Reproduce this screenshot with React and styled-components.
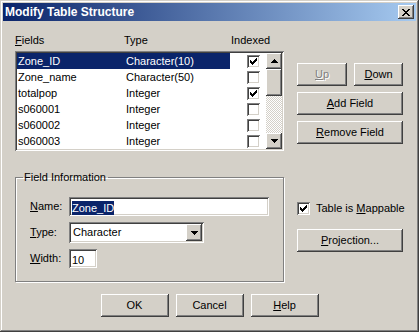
import React from "react";
import styled, { createGlobalStyle } from "styled-components";

const Global = createGlobalStyle`
  html, body { margin: 0; padding: 0; background: #d4d0c8; }
  body { font-family: "Liberation Sans", Arial, sans-serif; font-size: 11px; color: #000; }
  * { box-sizing: border-box; }
`;

const raised = `box-shadow: inset -1px -1px #404040, inset 1px 1px #ffffff, inset -2px -2px #808080, inset 2px 2px #d4d0c8;`;
const sunken = `box-shadow: inset 1px 1px #808080, inset -1px -1px #ffffff, inset 2px 2px #404040, inset -2px -2px #d4d0c8;`;

const Window = styled.div`
  width: 419px;
  height: 332px;
  background: #d4d0c8;
  padding: 3px;
  box-shadow: inset -1px -1px #404040, inset 1px 1px #d4d0c8, inset -2px -2px #808080, inset 2px 2px #ffffff;
  display: flex;
  flex-direction: column;
`;

const TitleBar = styled.div`
  height: 18px;
  flex: none;
  display: flex;
  align-items: center;
  justify-content: space-between;
  padding: 0 2px 0 2px;
  background: linear-gradient(to right, #0a246a, #a6caf0);
`;

const Title = styled.span`
  color: #fff;
  font-weight: bold;
  font-size: 12px;
  line-height: 18px;
`;

const CloseBox = styled.div`
  width: 16px;
  height: 14px;
  background: #d4d0c8;
  ${raised}
  display: flex;
  align-items: center;
  justify-content: center;
`;

const Body = styled.div`
  display: grid;
  grid-template-columns: 269px 106px;
  column-gap: 13px;
  padding: 13px 0 0 12px;
`;

const LeftTop = styled.div`
  display: flex;
  flex-direction: column;
  gap: 4px;
`;

const Header = styled.div`
  display: grid;
  grid-template-columns: 109px 107px auto;
  line-height: 13px;
  height: 13px;
`;

const U = styled.span`
  text-decoration: underline;
`;

const ListBox = styled.div`
  height: 100px;
  background: #fff;
  ${sunken}
  padding: 2px;
  display: flex;
`;

const Rows = styled.div`
  flex: 1;
  display: flex;
  flex-direction: column;
`;

const Row = styled.div`
  height: 16px;
  display: grid;
  grid-template-columns: 107px 106px 36px;
  align-items: stretch;
`;

const Cell = styled.div`
  line-height: 16px;
  padding-left: ${(p) => p.$pad}px;
  background: ${(p) => (p.$sel ? "#0a246a" : "transparent")};
  color: ${(p) => (p.$sel ? "#fff" : "#000")};
  white-space: nowrap;
`;

const CheckCell = styled.div`
  display: flex;
  align-items: center;
  padding-left: 17px;
`;

const Check = styled.div`
  width: 13px;
  height: 13px;
  flex: none;
  background: #fff;
  ${sunken}
  display: flex;
  align-items: center;
  justify-content: center;
`;

const ScrollBar = styled.div`
  width: 16px;
  display: flex;
  flex-direction: column;
  background-color: #ffffff;
  background-image: repeating-conic-gradient(#d4d0c8 0% 25%, #ffffff 0% 50%);
  background-size: 2px 2px;
`;

const ScrollBtn = styled.div`
  width: 16px;
  height: ${(p) => p.$h}px;
  background: #d4d0c8;
  ${raised}
  display: flex;
  align-items: center;
  justify-content: center;
  flex: none;
`;

const Spacer = styled.div`
  flex: 1;
`;

const RightTop = styled.div`
  display: flex;
  flex-direction: column;
  gap: 6px;
  padding-top: 29px;
`;

const BtnRow = styled.div`
  display: flex;
  justify-content: space-between;
`;

const Button = styled.div`
  width: ${(p) => p.$w}px;
  height: 23px;
  background: #d4d0c8;
  ${raised}
  display: flex;
  align-items: center;
  justify-content: center;
  line-height: 13px;
  white-space: nowrap;
  color: ${(p) => (p.$disabled ? "#808080" : "#000")};
  text-shadow: ${(p) => (p.$disabled ? "1px 1px #ffffff" : "none")};
`;

const Group = styled.fieldset`
  margin: 20px 0 0 0;
  padding: 13px 0 13px 14px;
  border: 1px solid #808080;
  box-shadow: inset 1px 1px #ffffff, 1px 1px #ffffff;
  display: flex;
  flex-direction: column;
  gap: 6px;
  min-width: 0;
`;

const Legend = styled.legend`
  padding: 0 2px 0 1px;
  margin-left: -7px;
  line-height: 13px;
`;

const FormRow = styled.div`
  display: flex;
  align-items: center;
`;

const Label = styled.div`
  width: 39px;
  line-height: 13px;
`;

const Input = styled.div`
  width: ${(p) => p.$w}px;
  height: ${(p) => p.$h || 19}px;
  background: #fff;
  ${sunken}
  padding: 2px 3px 0 3px;
  line-height: 14px;
  display: flex;
  align-items: center;
`;

const Selected = styled.span`
  background: #0a246a;
  color: #fff;
`;

const Select = styled.div`
  width: 135px;
  height: 21px;
  background: #fff;
  ${sunken}
  padding: 2px;
  display: flex;
  align-items: stretch;
`;

const SelectText = styled.div`
  flex: 1;
  line-height: 17px;
  padding-left: 2px;
`;

const RightLower = styled.div`
  display: flex;
  flex-direction: column;
  padding-top: 51px;
  gap: 14px;
`;

const CheckLabel = styled.div`
  display: flex;
  align-items: center;
  gap: 6px;
  line-height: 13px;
  white-space: nowrap;
`;

const Footer = styled.div`
  grid-column: 1 / span 2;
  display: flex;
  justify-content: center;
  gap: 7px;
  padding-top: 12px;
  margin-left: -12px;
  width: 413px;
`;

const CheckMark = () => (
  <svg width="7" height="7" viewBox="0 0 7 7" shapeRendering="crispEdges">
    <path
      fill="#000"
      d="M6 0h1v3h-1v1h-1v1h-1v1h-1v1h-1v-1h-1v-1h-1v-3h1v1h1v1h1v-1h1v-1h1v-1h1z"
    />
  </svg>
);

const Arrow = ({ down }) => (
  <svg width="7" height="4" viewBox="0 0 7 4" shapeRendering="crispEdges" style={{ transform: down ? "none" : "rotate(180deg)" }}>
    <path fill="#000" d="M0 0h7v1h-1v1h-1v1h-1v1h-1v-1h-1v-1h-1v-1h-1z" />
  </svg>
);

const CloseX = () => (
  <svg width="8" height="7" viewBox="0 0 8 7" shapeRendering="crispEdges">
    <path
      fill="#000"
      d="M0 0h2v1h1v1h2v-1h1v-1h2v1h-1v1h-1v1h-1v1h1v1h1v1h1v1h-2v-1h-1v-1h-2v1h-1v1h-2v-1h1v-1h1v-1h1v-1h-1v-1h-1v-1h-1z"
    />
  </svg>
);

const fields = [
  { name: "Zone_ID", type: "Character(10)", idx: true, sel: true },
  { name: "Zone_name", type: "Character(50)", idx: false },
  { name: "totalpop", type: "Integer", idx: true },
  { name: "s060001", type: "Integer", idx: false },
  { name: "s060002", type: "Integer", idx: false },
  { name: "s060003", type: "Integer", idx: false },
];

export default function App() {
  return (
    <>
      <Global />
      <Window>
        <TitleBar>
          <Title>Modify Table Structure</Title>
          <CloseBox>
            <CloseX />
          </CloseBox>
        </TitleBar>
        <Body>
          <LeftTop>
            <Header>
              <span>
                <U>F</U>ields
              </span>
              <span>Type</span>
              <span>Indexed</span>
            </Header>
            <ListBox>
              <Rows>
                {fields.map((f) => (
                  <Row key={f.name}>
                    <Cell $pad={1} $sel={f.sel}>{f.name}</Cell>
                    <Cell $pad={2} $sel={f.sel}>{f.type}</Cell>
                    <CheckCell>
                      <Check>{f.idx && <CheckMark />}</Check>
                    </CheckCell>
                  </Row>
                ))}
              </Rows>
              <ScrollBar>
                <ScrollBtn $h={16}>
                  <Arrow />
                </ScrollBtn>
                <ScrollBtn $h={27} />
                <Spacer />
                <ScrollBtn $h={16}>
                  <Arrow down />
                </ScrollBtn>
              </ScrollBar>
            </ListBox>
          </LeftTop>
          <RightTop>
            <BtnRow>
              <Button $w={50} $disabled>
                <span>
                  <U>U</U>p
                </span>
              </Button>
              <Button $w={49}>
                <span>
                  <U>D</U>own
                </span>
              </Button>
            </BtnRow>
            <Button $w={106}>
              <span>
                <U>A</U>dd Field
              </span>
            </Button>
            <Button $w={106}>
              <span>
                <U>R</U>emove Field
              </span>
            </Button>
          </RightTop>

          <Group>
            <Legend>Field Information</Legend>
            <FormRow>
              <Label>
                <U>N</U>ame:
              </Label>
              <Input $w={200}>
                <Selected>Zone_ID</Selected>
              </Input>
            </FormRow>
            <FormRow>
              <Label>
                <U>T</U>ype:
              </Label>
              <Select>
                <SelectText>Character</SelectText>
                <ScrollBtn $h={17}>
                  <Arrow down />
                </ScrollBtn>
              </Select>
            </FormRow>
            <FormRow>
              <Label>
                <U>W</U>idth:
              </Label>
              <Input $w={28}>10</Input>
            </FormRow>
          </Group>
          <RightLower>
            <CheckLabel>
              <Check>
                <CheckMark />
              </Check>
              <span>
                Table is <U>M</U>appable
              </span>
            </CheckLabel>
            <Button $w={106}>
              <span>
                <U>P</U>rojection...
              </span>
            </Button>
          </RightLower>

          <Footer>
            <Button $w={68}>OK</Button>
            <Button $w={68}>Cancel</Button>
            <Button $w={68}>
              <span>
                <U>H</U>elp
              </span>
            </Button>
          </Footer>
        </Body>
      </Window>
    </>
  );
}
